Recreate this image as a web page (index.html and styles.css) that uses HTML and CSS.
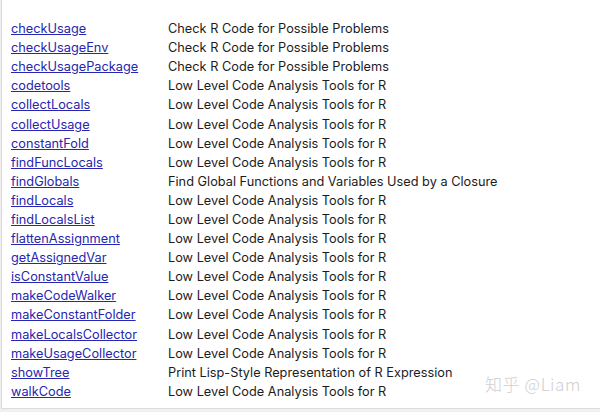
FILE: index.html
```html
<!DOCTYPE html>
<html>
<head>
<meta charset="utf-8">
<link rel="stylesheet" href="styles.css">
</head>
<body>
<div class="frame">
<table class="idx">
<tr><td><a href="#">checkUsage</a></td><td>Check R Code for Possible Problems</td></tr>
<tr><td><a href="#">checkUsageEnv</a></td><td>Check R Code for Possible Problems</td></tr>
<tr><td><a href="#">checkUsagePackage</a></td><td>Check R Code for Possible Problems</td></tr>
<tr><td><a href="#">codetools</a></td><td>Low Level Code Analysis Tools for R</td></tr>
<tr><td><a href="#">collectLocals</a></td><td>Low Level Code Analysis Tools for R</td></tr>
<tr><td><a href="#">collectUsage</a></td><td>Low Level Code Analysis Tools for R</td></tr>
<tr><td><a href="#">constantFold</a></td><td>Low Level Code Analysis Tools for R</td></tr>
<tr><td><a href="#">findFuncLocals</a></td><td>Low Level Code Analysis Tools for R</td></tr>
<tr><td><a href="#">findGlobals</a></td><td>Find Global Functions and Variables Used by a Closure</td></tr>
<tr><td><a href="#">findLocals</a></td><td>Low Level Code Analysis Tools for R</td></tr>
<tr><td><a href="#">findLocalsList</a></td><td>Low Level Code Analysis Tools for R</td></tr>
<tr><td><a href="#">flattenAssignment</a></td><td>Low Level Code Analysis Tools for R</td></tr>
<tr><td><a href="#">getAssignedVar</a></td><td>Low Level Code Analysis Tools for R</td></tr>
<tr><td><a href="#">isConstantValue</a></td><td>Low Level Code Analysis Tools for R</td></tr>
<tr><td><a href="#">makeCodeWalker</a></td><td>Low Level Code Analysis Tools for R</td></tr>
<tr><td><a href="#">makeConstantFolder</a></td><td>Low Level Code Analysis Tools for R</td></tr>
<tr><td><a href="#">makeLocalsCollector</a></td><td>Low Level Code Analysis Tools for R</td></tr>
<tr><td><a href="#">makeUsageCollector</a></td><td>Low Level Code Analysis Tools for R</td></tr>
<tr><td><a href="#">showTree</a></td><td>Print Lisp-Style Representation of R Expression</td></tr>
<tr><td><a href="#">walkCode</a></td><td>Low Level Code Analysis Tools for R</td></tr>
</table>
</div>
<div class="mark">知乎 @Liam</div>
</body>
</html>
```
FILE: styles.css
```css
html, body { margin: 0; padding: 0; background: #f0f0f0; }
body { width: 600px; height: 412px; overflow: hidden; position: relative; font-family: Inter, "Liberation Sans", Arial, sans-serif; }
.frame {
  margin-left: 1px;
  height: 409px;
  background: #fff;
  border-left: 1px solid #d8d8d8;
  border-bottom: 1px solid #dcdcdc;
  padding: 19px 0 0 9px;
  box-sizing: border-box;
}
.idx { border-collapse: collapse; font-size: 12.75px; color: #1c1c1c; }
.idx td { padding: 0; height: 19.1px; line-height: 19px; vertical-align: middle; white-space: nowrap; }
.idx td:first-child { width: 157px; }
.idx a { color: #2626b0; text-decoration: underline; }
.mark {
  position: absolute; left: 485px; top: 371px;
  font-family: "Noto Sans CJK SC", "Liberation Sans", sans-serif;
  font-size: 17px; font-weight: 300; color: #cfcfcf; letter-spacing: 0.6px;
  text-shadow: 0 0 1px #fff;
}
```
